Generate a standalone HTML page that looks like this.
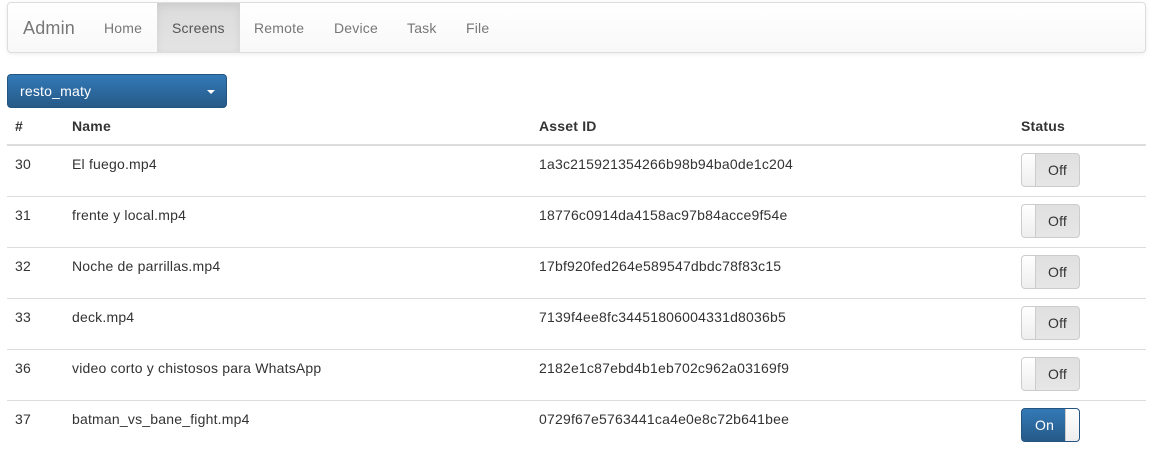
<!DOCTYPE html>
<html><head><style>
body{margin:0;width:1153px;height:472px;background:#fff;font-family:"Liberation Sans",sans-serif;font-size:14px;color:#333;position:relative;overflow:hidden;letter-spacing:0.2px}
.nav{position:absolute;left:7px;top:2px;width:1137px;height:49px;border:1px solid #ddd;border-radius:4px;background:linear-gradient(#fff,#f8f8f8);box-shadow:0 1px 4px rgba(0,0,0,.08)}
.nav span{position:absolute;top:0;height:49px;line-height:50px;color:#777;font-size:14px}
.nav .brand{font-size:18px;left:15px}
.nav .act{background:linear-gradient(#dbdbdb,#e4e4e4);box-shadow:inset 0 3px 9px rgba(0,0,0,.075);padding:0 15px;color:#555}
.dd{position:absolute;left:7px;top:74px;width:218px;height:32px;border:1px solid #245580;border-radius:4px;background:linear-gradient(#337ab7,#265a88);color:#fff;line-height:32px;box-sizing:content-box}
.dd span{position:absolute;left:12px}
.dd i{position:absolute;left:199px;top:15px;border-left:4px solid transparent;border-right:4px solid transparent;border-top:4px solid #fff}
.t{position:absolute;white-space:nowrap}
.b{font-weight:bold}
.hl{position:absolute;left:7px;width:1139px;height:1px;background:#ddd}
.tg{position:absolute;left:1021px;width:57px;height:32px;border:1px solid #ccc;border-radius:4px;background:linear-gradient(#e0e0e0,#e6e6e6);overflow:hidden}
.tg .k{position:absolute;left:0;top:0;width:13px;height:32px;background:linear-gradient(#fff,#eee);border-right:1px solid #ccc}
.tg .l{position:absolute;left:26px;top:0;line-height:32px;color:#333}
.on{background:linear-gradient(#337ab7,#265a88);border-color:#245580}
.on .k{left:auto;right:0;border-right:0;border-left:1px solid #ccc}
.on .l{left:13px;color:#fff}
</style></head><body>
<div class="nav">
<span class="brand">Admin</span>
<span style="left:96px">Home</span>
<span class="act" style="left:149px">Screens</span>
<span style="left:246px">Remote</span>
<span style="left:326px">Device</span>
<span style="left:399px">Task</span>
<span style="left:458px">File</span>
</div>
<div class="dd"><span>resto_maty</span><i></i></div>
<div class="t b" style="left:15px;top:118px">#</div>
<div class="t b" style="left:72px;top:118px">Name</div>
<div class="t b" style="left:539px;top:118px">Asset ID</div>
<div class="t b" style="left:1021px;top:118px">Status</div>
<div class="hl" style="top:144px;height:2px"></div>

<div class="t" style="left:15px;top:156px">30</div><div class="t" style="left:72px;top:156px">El fuego.mp4</div><div class="t" style="left:539px;top:156px">1a3c215921354266b98b94ba0de1c204</div>
<div class="tg" style="top:153px"><div class="k"></div><div class="l">Off</div></div>
<div class="hl" style="top:196px"></div>

<div class="t" style="left:15px;top:207px">31</div><div class="t" style="left:72px;top:207px">frente y local.mp4</div><div class="t" style="left:539px;top:207px">18776c0914da4158ac97b84acce9f54e</div>
<div class="tg" style="top:204px"><div class="k"></div><div class="l">Off</div></div>
<div class="hl" style="top:247px"></div>

<div class="t" style="left:15px;top:258px">32</div><div class="t" style="left:72px;top:258px">Noche de parrillas.mp4</div><div class="t" style="left:539px;top:258px">17bf920fed264e589547dbdc78f83c15</div>
<div class="tg" style="top:255px"><div class="k"></div><div class="l">Off</div></div>
<div class="hl" style="top:298px"></div>

<div class="t" style="left:15px;top:309px">33</div><div class="t" style="left:72px;top:309px">deck.mp4</div><div class="t" style="left:539px;top:309px">7139f4ee8fc34451806004331d8036b5</div>
<div class="tg" style="top:306px"><div class="k"></div><div class="l">Off</div></div>
<div class="hl" style="top:349px"></div>

<div class="t" style="left:15px;top:360px">36</div><div class="t" style="left:72px;top:360px">video corto y chistosos para WhatsApp</div><div class="t" style="left:539px;top:360px">2182e1c87ebd4b1eb702c962a03169f9</div>
<div class="tg" style="top:357px"><div class="k"></div><div class="l">Off</div></div>
<div class="hl" style="top:400px"></div>

<div class="t" style="left:15px;top:411px">37</div><div class="t" style="left:72px;top:411px">batman_vs_bane_fight.mp4</div><div class="t" style="left:539px;top:411px">0729f67e5763441ca4e0e8c72b641bee</div>
<div class="tg on" style="top:408px"><div class="k"></div><div class="l">On</div></div>
</body></html>
